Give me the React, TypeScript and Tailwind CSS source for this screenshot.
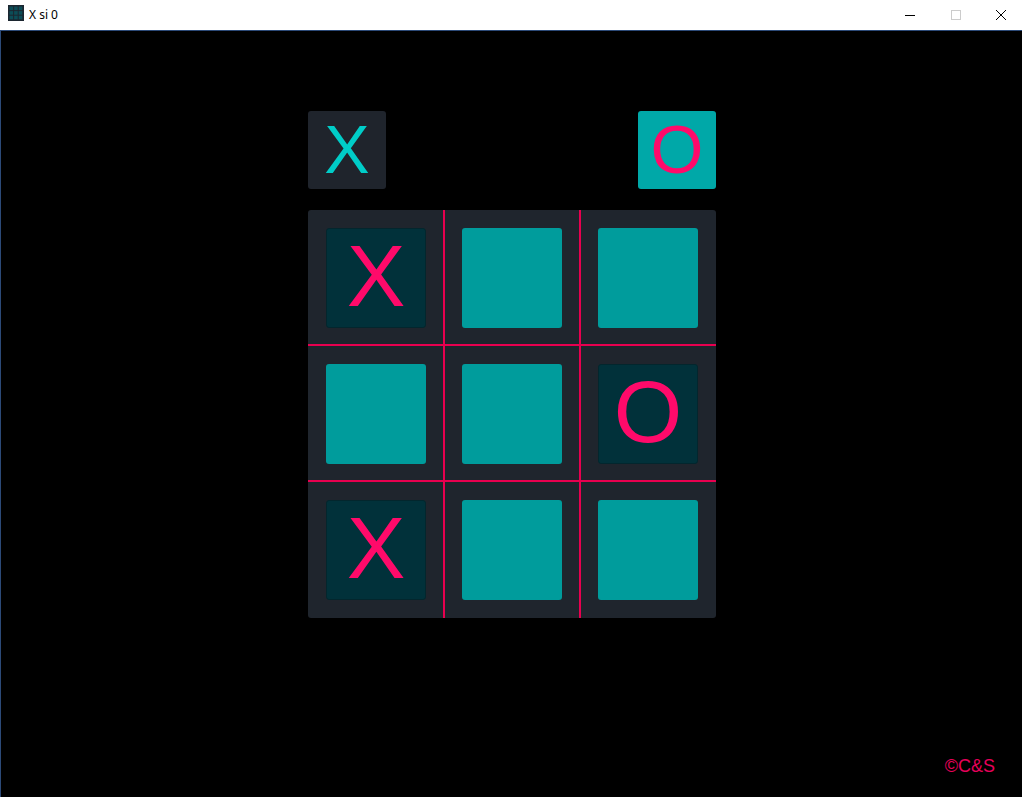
import React from "react";

type Mark = "X" | "O" | null;

const board: Mark[] = ["X", null, null, null, null, "O", "X", null, null];

function AppIcon() {
    const cells = [0, 1, 2];
    return (
        <svg width="16" height="16" viewBox="0 0 16 16">
            <rect width="16" height="16" fill="#1c2630" />
            {cells.map((r) =>
                cells.map((c) => (
                    <rect key={`${r}-${c}`} x={1.5 + c * 4.6} y={1.5 + r * 4.6} width="3.6" height="3.6" fill="#0c4d57" />
                ))
            )}
        </svg>
    );
}

function TitleBar() {
    return (
        <div className="flex h-[30px] items-center bg-white" style={{ fontFamily: '"Noto Sans", "Liberation Sans", sans-serif' }}>
            <div className="ml-[8px] flex h-[16px] w-[16px] -translate-y-[2px]">
                <AppIcon />
            </div>
            <span className="ml-[5px] text-[12px] leading-none text-black">X si 0</span>
            <div className="ml-auto flex h-full">
                <div className="flex h-full w-[46px] items-center justify-center pl-[2px]">
                    <svg width="10" height="10" viewBox="0 0 10 10">
                        <line x1="0" y1="5.5" x2="10" y2="5.5" stroke="#000" strokeWidth="1" />
                    </svg>
                </div>
                <div className="flex h-full w-[46px] items-center justify-center pl-[2px]">
                    <svg width="10" height="10" viewBox="0 0 10 10">
                        <rect x="0.5" y="0.5" width="9" height="9" fill="none" stroke="#cccccc" strokeWidth="1" />
                    </svg>
                </div>
                <div className="flex h-full w-[44px] items-center justify-center pl-[2px]">
                    <svg width="10" height="10" viewBox="0 0 10 10">
                        <path d="M0 0 L10 10 M10 0 L0 10" stroke="#000" strokeWidth="1" />
                    </svg>
                </div>
            </div>
        </div>
    );
}

function Cell({ mark }: { mark: Mark }) {
    return (
        <div className="flex h-[136px] w-[136px] items-center justify-center">
            {mark ? (
                <div className="flex h-[100px] w-[100px] items-center justify-center rounded-[3px] border border-[#03262d] bg-[#01313a]">
                    <span className="-translate-y-[2px] text-[88px] leading-none text-[#ff0a6a]">{mark}</span>
                </div>
            ) : (
                <div className="h-[100px] w-[100px] rounded-[3px] bg-[#009c9c]" />
            )}
        </div>
    );
}

export default function App() {
    return (
        <div className="flex h-[797px] w-[1022px] flex-col overflow-hidden bg-black">
            <TitleBar />
            <div
                className="relative flex flex-1 flex-col border-l border-t border-[#2c4a78] pl-[307px] pt-[80px]"
                style={{ fontFamily: '"Liberation Sans", Arial, sans-serif' }}
            >
                <div className="flex w-[408px] justify-between">
                    <div className="flex h-[78px] w-[78px] items-center justify-center rounded-[3px] bg-[#1f242c]">
                        <span className="-translate-y-[1px] text-[68px] leading-none text-[#00cdc8]">X</span>
                    </div>
                    <div className="flex h-[78px] w-[78px] items-center justify-center rounded-[3px] bg-[#00a8a8]">
                        <span className="-translate-y-[1px] text-[68px] leading-none text-[#ff0a6a]">O</span>
                    </div>
                </div>

                <div className="relative mt-[21px] grid h-[408px] w-[408px] grid-cols-3 rounded-[3px] bg-[#1f252d]">
                    {board.map((m, i) => (
                        <Cell key={i} mark={m} />
                    ))}
                    {/* separator lines */}
                    <div className="absolute left-[135px] top-0 h-full w-[2px] bg-[#e8004f]" />
                    <div className="absolute left-[271px] top-0 h-full w-[2px] bg-[#e8004f]" />
                    <div className="absolute left-0 top-[134px] h-[2px] w-full bg-[#e8004f]" />
                    <div className="absolute left-0 top-[270px] h-[2px] w-full bg-[#e8004f]" />
                </div>

                <div className="mt-auto self-end pb-[17px] pr-[27px] text-[18px] text-[#e8005a]">©C&amp;S</div>
            </div>
        </div>
    );
}
